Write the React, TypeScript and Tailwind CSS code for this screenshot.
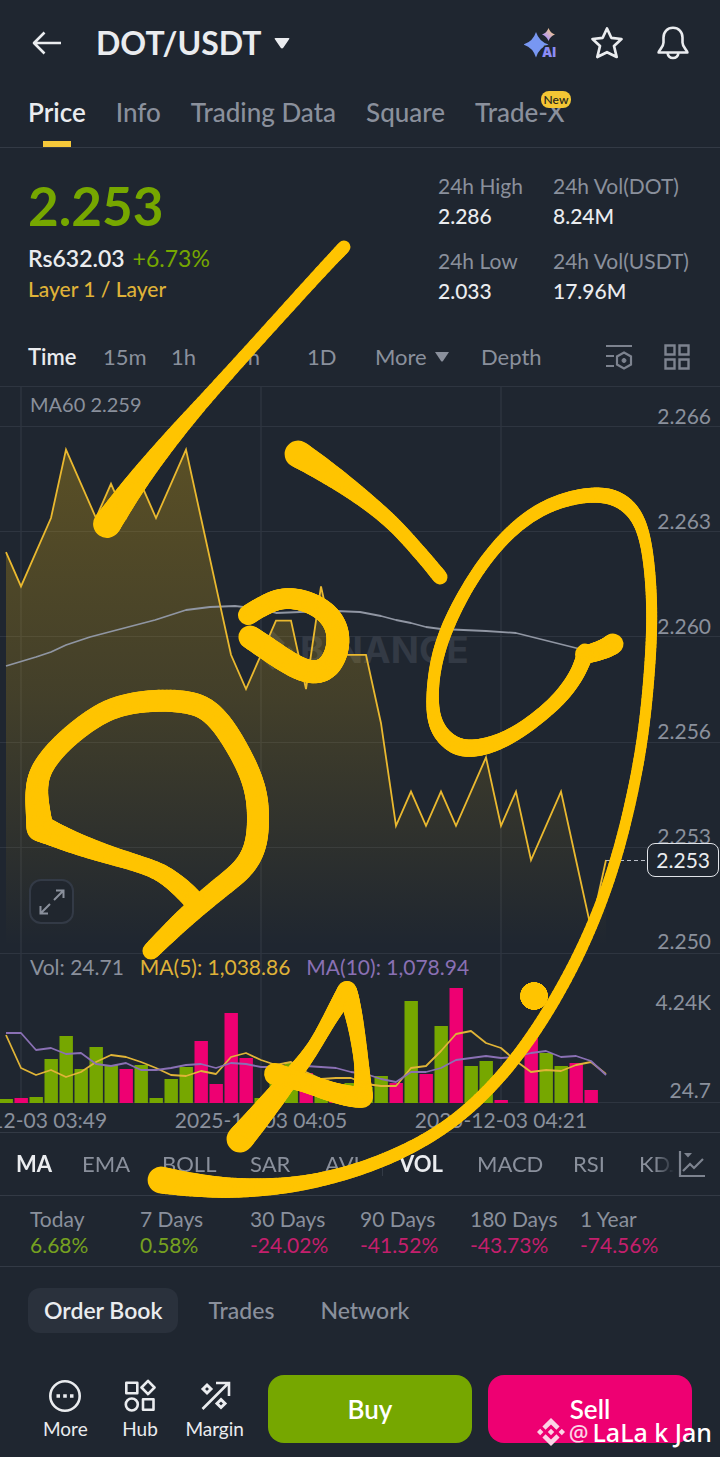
import { useState } from 'react';
import { clsx } from 'clsx';

const tabs = ['Price', 'Info', 'Trading Data', 'Square', 'Trade-X'];

const stats = [
  { label: '24h High', value: '2.286' },
  { label: '24h Vol(DOT)', value: '8.24M' },
  { label: '24h Low', value: '2.033' },
  { label: '24h Vol(USDT)', value: '17.96M' },
];

const performance = [
  { label: 'Today', value: '6.68%' },
  { label: '7 Days', value: '0.58%' },
  { label: '30 Days', value: '-24.02%' },
  { label: '90 Days', value: '-41.52%' },
  { label: '180 Days', value: '-43.73%' },
  { label: '1 Year', value: '-74.56%' },
];

const prices = [
  2.262, 2.261, 2.262, 2.263, 2.265, 2.264, 2.263, 2.264, 2.263, 2.264, 2.263, 2.264, 2.265, 2.263,
  2.261, 2.259, 2.258, 2.259, 2.26, 2.26, 2.258, 2.261, 2.259, 2.259, 2.259, 2.257, 2.254, 2.255,
  2.254, 2.255, 2.254, 2.255, 2.256, 2.254, 2.255, 2.253, 2.254, 2.255, 2.253, 2.251, 2.253,
];

const ma60 =
  '6,280 36,271 51,266 66,259 90,251 155,234 186,224 210,221 235,220 261,223 276,227 300,226 336,225 360,226 381,230 396,234 411,237 426,241 441,243 486,245 516,247 576,262 606,269';

// negative = sell volume
const volumes = [
  4, -5, 6, 44, 67, 34, 56, 38, -34, 38, 5, 24, 36, -62, -19, -90, -45, 5, 23, 41, -30, 13, -3, 20,
  16, 27, -20, 102, -29, 77, -115, 37, 42, -3, 0, -68, 50, 37, -40, -13,
];
const volMa5 = [
  68, 35, 28, 33, 26, 31, 41, 48, 46, 41, 35, 28, 27, 32, 29, 46, 50, 43, 38, 41, 31, 24, 25, 25, 19,
  17, 17, 35, 37, 52, 69, 72, 60, 55, 42, 31, 33, 32, 38, 41, 29,
];
const volMa10 = [
  70, 70, 53, 55, 49, 50, 39, 37, 40, 33, 33, 35, 38, 39, 35, 40, 39, 36, 36, 35, 37, 36, 35, 31, 29,
  24, 21, 31, 31, 35, 43, 45, 47, 45, 46, 50, 52, 46, 47, 42, 28,
];

const BASE = 717;
const px = (i: number) => 6 + i * 15;
const priceY = (p: number) => 474 - (p - 2.253) * 34200;
const volLine = (data: number[]) => data.map((v, i) => `${px(i)},${BASE - v}`).join(' ');

type Dot = [number, number, number];

// marker strokes: x, y, width
const strokes: Dot[][] = [
  [[344, 247, 13], [300, 294, 12], [221, 382, 12], [185, 422, 15], [147, 468, 20], [125, 498, 24], [107, 524, 28]],
  [[298, 454, 27], [330, 474, 22], [360, 496, 17], [385, 516, 15], [410, 541, 14], [440, 577, 15]],
  [[248, 615, 20], [268, 603, 20], [288, 597, 21], [315, 604, 21], [334, 620, 22], [339, 641, 23], [333, 662, 23], [318, 674, 23], [295, 667, 23], [271, 651, 24], [250, 637, 23]],
  [[151, 951, 17], [172, 930, 19], [200, 904, 21], [230, 880, 21], [254, 857, 22], [258, 823, 22], [257, 794, 22], [246, 764, 21], [230, 736, 22], [212, 712, 22], [185, 700, 23], [133, 702, 21], [104, 712, 21], [78, 729, 20], [46, 759, 20], [37, 783, 22], [37, 803, 23], [40, 828, 27]],
  [[40, 828, 27], [60, 837, 23], [85, 847, 21], [122, 859, 17], [152, 868, 17], [171, 879, 19], [190, 896, 21], [197, 905, 20]],
  [[613, 644, 21], [598, 652, 19], [584, 654, 18]],
  [[585, 652, 17], [581, 667, 15], [569, 687, 15], [553, 705, 14], [531, 723, 14], [505, 740, 15], [472, 750, 18], [451, 744, 17], [436, 727, 15], [432, 702, 12], [435, 665, 12], [446, 630, 13], [461, 599, 12], [479, 569, 12], [502, 540, 12], [528, 517, 13], [558, 501, 14], [593, 494, 15], [617, 498, 16], [633, 511, 14], [643, 530, 12], [649, 562, 11], [652, 605, 11], [651, 650, 11], [647, 700, 11], [641, 750, 11], [630, 805, 11], [616, 860, 11], [595, 920, 11], [564, 985, 12], [527, 1044, 12], [495, 1083, 12], [462, 1115, 12], [427, 1139, 12], [393, 1156, 13], [360, 1169, 13], [320, 1180, 14], [283, 1186, 16], [245, 1188, 19], [207, 1187, 22], [161, 1180, 27]],
  [[240, 1139, 27], [268, 1106, 23], [290, 1078, 18], [308, 1056, 14], [322, 1033, 13], [336, 1008, 16], [347, 991, 20]],
  [[347, 991, 20], [353, 1010, 18], [360, 1050, 14], [363, 1080, 15], [362, 1097, 22]],
  [[362, 1097, 21], [345, 1096, 21], [320, 1088, 19], [300, 1081, 19], [275, 1074, 22]],
  [[534, 996, 27], [534, 996, 27]],
];

const spline = (a: number, b: number, c: number, d: number, t: number) =>
  0.5 * (2 * b + (c - a) * t + (2 * a - 5 * b + 4 * c - d) * t * t + (3 * b - a - 3 * c + d) * t * t * t);

function smooth(points: Dot[], steps = 12, radius = 9): Dot[] {
  const line: Dot[] = [];
  for (let i = 0; i < points.length - 1; i++) {
    const p0 = points[Math.max(i - 1, 0)];
    const p1 = points[i];
    const p2 = points[i + 1];
    const p3 = points[Math.min(i + 2, points.length - 1)];
    for (let s = 0; s < steps; s++) {
      const t = s / steps;
      line.push([
        spline(p0[0], p1[0], p2[0], p3[0], t),
        spline(p0[1], p1[1], p2[1], p3[1], t),
        p1[2] + (p2[2] - p1[2]) * t,
      ]);
    }
  }
  line.push(points[points.length - 1]);

  // average the neighbours, both ends stay where they are
  return line.map((_, i) => {
    const r = Math.min(radius, i, line.length - 1 - i);
    const near = line.slice(i - r, i + r + 1);
    const mean = (k: number) => near.reduce((sum, p) => sum + p[k], 0) / near.length;
    return [mean(0), mean(1), mean(2)];
  });
}

function Drawing() {
  return (
    <svg
      viewBox="0 0 720 1457"
      preserveAspectRatio="none"
      className="pointer-events-none absolute inset-0 z-20 h-full w-full"
      stroke="#ffc400"
      strokeLinecap="round"
      aria-hidden="true"
    >
      {strokes.map((points, n) => {
        const line = smooth(points);
        return (
          <g key={n}>
            {line.slice(1).map(([x, y, w], i) => (
              <line key={i} x1={line[i][0]} y1={line[i][1]} x2={x + 0.01} y2={y} strokeWidth={(line[i][2] + w) / 2} />
            ))}
          </g>
        );
      })}
    </svg>
  );
}

function BinanceMark({ className }: { className?: string }) {
  return (
    <svg viewBox="0 0 28 28" className={className} fill="currentColor" aria-hidden="true">
      <path d="M14 0l8.6 8.6-3.2 3.2L14 6.4l-5.4 5.4-3.2-3.2z" />
      <path d="M14 28l8.6-8.6-3.2-3.2L14 21.6l-5.4-5.4-3.2 3.2z" />
      <path d="M3.2 10.8L6.4 14l-3.2 3.2L0 14zM24.8 10.8L28 14l-3.2 3.2-3.2-3.2zM14 10.8l3.2 3.2-3.2 3.2-3.2-3.2z" />
    </svg>
  );
}

function PriceChart() {
  const line = prices.map((p, i) => `${px(i)},${priceY(p)}`).join(' ');

  return (
    <div className="relative h-[717px] overflow-hidden">
      <svg viewBox="0 0 720 717" preserveAspectRatio="none" className="block h-full w-full" fill="none">
        <defs>
          <linearGradient id="area" x1="0" y1="64" x2="0" y2="560" gradientUnits="userSpaceOnUse">
            <stop offset="0" stopColor="#f0b90b" stopOpacity="0.28" />
            <stop offset="0.5" stopColor="#f0b90b" stopOpacity="0.17" />
            <stop offset="1" stopColor="#f0b90b" stopOpacity="0" />
          </linearGradient>
        </defs>
        <g stroke="#2e3540" strokeWidth="1">
          {[0.5, 40.5, 145.5, 250.5, 356.5, 461.5, 567.5, 716.5].map((y) => (
            <path key={y} d={`M0 ${y}H720`} />
          ))}
          {[21, 261, 501].map((x) => (
            <path key={x} d={`M${x} 0V717`} strokeWidth="1.4" />
          ))}
        </g>
        <g fill="#333a45">
          <path d="M273 245l12 12-4 4-8-8-8 8-4-4zM273 284l12-12-4-4-8 8-8-8-4 4zM273 260l4.500 4.500-4.500 4.500-4.500-4.500zM257 260l4.500 4.500-4.500 4.500-4.500-4.500zM289 260l4.500 4.500-4.500 4.500-4.500-4.500z" />
          <text x="300" y="277" fontFamily="Inter, sans-serif" fontWeight="700" fontSize="37">
            BINANCE
          </text>
        </g>
        <polygon points={`6,567 ${line} 606,567`} fill="url(#area)" />
        <polyline points={ma60} stroke="#9096a3" strokeWidth="1.800" strokeLinejoin="round" />
        <polyline points={line} stroke="#eab92f" strokeWidth="1.800" />
        {volumes.map((v, i) => (
          <rect
            key={i}
            x={px(i) - 6.5}
            y={BASE - Math.abs(v)}
            width="13.4"
            height={Math.abs(v)}
            fill={v < 0 ? '#ee0072' : '#76a700'}
          />
        ))}
        <polyline points={volLine(volMa5)} stroke="#e0b437" strokeWidth="1.800" strokeLinejoin="round" />
        <polyline points={volLine(volMa10)} stroke="#8a70b4" strokeWidth="1.800" strokeLinejoin="round" />
        <path d="M606 474.500H648" stroke="#b9bec7" strokeWidth="1" strokeDasharray="4 3" />
      </svg>

      <span className="absolute top-1 left-[30px] text-xl leading-7 text-[#8a909c]">MA60 2.259</span>

      <div className="absolute top-[15px] right-[9px] flex flex-col text-right text-[21px] leading-[30px] text-[#8a909c]">
        {['2.266', '2.263', '2.260', '2.256', '2.253', '2.250'].map((p) => (
          <span key={p} className="h-[105px]">
            {p}
          </span>
        ))}
      </div>
      <span className="absolute top-[457px] right-px rounded-lg border border-[#e0e3e8] bg-[#1f2630] px-2 text-[21px] leading-8 text-[#eaecef]">
        2.253
      </span>

      <button
        type="button"
        aria-label="Full screen"
        className="absolute top-[493px] left-[29px] flex size-[45px] items-center justify-center rounded-xl border-2 border-[#333a46] bg-[#20262f]/90"
      >
        <svg viewBox="0 0 28 28" className="size-7" fill="none" stroke="#8a909c" strokeWidth="2">
          <path d="M16 12L25 3M18 2.500h7.500V10M12 16l-9 9M2.500 18v7.500H10" />
        </svg>
      </button>

      <div className="absolute top-[566px] left-[30px] flex gap-4 text-[21px] leading-[30px]">
        <span className="text-[#8a909c]">Vol: 24.71</span>
        <span className="text-[#dfb238]">MA(5): 1,038.86</span>
        <span className="text-[#8a70b4]">MA(10): 1,078.94</span>
      </div>
      <span className="absolute top-[601px] right-[9px] text-[21px] leading-[30px] text-[#8a909c]">4.24K</span>
      <span className="absolute right-[9px] bottom-px text-[21px] leading-6 text-[#8a909c]">24.7</span>
    </div>
  );
}

function Interval({ label, active, onClick }: { label: string; active: boolean; onClick: () => void }) {
  return (
    <button type="button" onClick={onClick} className={clsx(active ? 'font-semibold text-[#eaecef]' : 'text-[#8a909c]')}>
      {label}
    </button>
  );
}

export default function App() {
  const [tab, setTab] = useState('Price');
  const [interval, setInterval] = useState('Time');
  const [book, setBook] = useState('Order Book');

  return (
    <main className="relative overflow-hidden bg-[#1f2630] font-[Lato,sans-serif] text-[#eaecef]">
      {/* Header */}
      <header className="flex h-[86px] items-center pr-[30px] pl-8">
        <button type="button" aria-label="Back">
          <svg viewBox="0 0 30 24" className="h-6 w-[30px]" fill="none" stroke="currentColor" strokeWidth="2.600" strokeLinejoin="round">
            <path d="M29 12H2.500M12.500 1.500L2 12l10.500 10.500" />
          </svg>
        </button>
        <button type="button" className="ml-[34px] flex items-center gap-3">
          <h1 className="text-[32px] leading-10 font-bold">DOT/USDT</h1>
          <svg viewBox="0 0 16 11" className="h-[11px] w-4" fill="currentColor" aria-hidden="true">
            <path d="M1.500 0h13q1.500 0 .6 1.300l-5.800 8.500q-1.300 1.400-2.600 0L.9 1.300Q0 0 1.500 0z" />
          </svg>
        </button>
        <div className="ml-auto flex items-center gap-8">
          <button type="button" aria-label="AI">
            <svg viewBox="0 0 34 34" className="size-[34px]">
              <defs>
                <linearGradient id="spark" x1="0" y1="1" x2="1" y2="0">
                  <stop offset="0.3" stopColor="#b79cf0" />
                  <stop offset="0.8" stopColor="#f0c58a" />
                </linearGradient>
              </defs>
              <path d="M12 6q3 9.500 12.500 12.500Q15 21.500 12 31.500 9 21.500-.5 18.500 9 15.500 12 6z" fill="#7897f2" />
              <path d="M24.500 2q1.800 5 6.500 6.500-4.700 1.500-6.500 6.500-1.800-5-6.500-6.500 4.700-1.500 6.500-6.500z" fill="url(#spark)" />
              <text x="18" y="31" fill="#8c8cf5" stroke="#1f2630" strokeWidth="3" paintOrder="stroke" fontFamily="Inter, sans-serif" fontWeight="900" fontSize="13">
                AI
              </text>
            </svg>
          </button>
          <button type="button" aria-label="Add to favorites">
            <svg viewBox="0 0 34 34" className="size-[34px]" fill="none" stroke="currentColor" strokeWidth="2.700" strokeLinejoin="round">
              <path d="M17 2.500l4.300 9.300 10.200 1.200-7.500 7 2.700 11L17 26.200 7.300 31 10 20l-7.500-7 10.200-1.200z" />
            </svg>
          </button>
          <button type="button" aria-label="Alerts">
            <svg viewBox="0 0 34 34" className="size-[34px]" fill="none" stroke="currentColor" strokeWidth="2.600" strokeLinejoin="round">
              <path d="M17 1.800c-5.700 0-9.500 4.200-9.500 9.700v5c0 3-1.400 4.800-3.100 6.800-1 1.300-1.800 2.200-1.800 3.200h28.800c0-1-.8-1.900-1.800-3.200-1.700-2-3.100-3.800-3.100-6.800v-5c0-5.500-3.800-9.700-9.500-9.700z" />
              <path d="M11.500 27c.6 3.500 2.800 5 5.500 5s4.900-1.500 5.500-5" />
            </svg>
          </button>
        </div>
      </header>

      {/* Tabs */}
      <nav className="flex h-[62px] gap-[30px] border-b border-[#333a45] px-7">
        {tabs.map((t) => (
          <button
            key={t}
            type="button"
            onClick={() => setTab(t)}
            className={clsx(
              'relative flex flex-col items-center pt-[11px] text-[26px] leading-[30px]',
              tab === t ? 'font-semibold' : 'font-medium text-[#8a909c]'
            )}
          >
            {t}
            {tab === t && <span className="mt-auto h-[6px] w-7 bg-[#f5c83a]" />}
            {t === 'Trade-X' && (
              <span className="absolute top-[5px] -right-[7px] rounded-lg bg-[#f4c634] px-[3px] text-xs leading-[17px] font-semibold text-[#2b2a1e]">
                New
              </span>
            )}
          </button>
        ))}
      </nav>

      {/* Price summary */}
      <section className="flex h-[180px] justify-between px-7">
        <div className="pt-[30px]">
          <p className="text-[53px] leading-[56px] font-bold text-[#76a700]">2.253</p>
          <p className="mt-[10px] flex gap-2 text-[23px] leading-7">
            <span className="font-semibold">Rs632.03</span>
            <span className="text-[#76a700]">+6.73%</span>
          </p>
          <a href="#layer" className="mt-[3px] block text-[21px] leading-7 font-medium text-[#dfb238]">
            Layer 1 / Layer
          </a>
        </div>
        <dl className="grid grid-cols-[115px_139px] content-start gap-y-[15px] pt-[23px]">
          {stats.map((s) => (
            <div key={s.label} className="text-[21px] leading-[30px] whitespace-nowrap">
              <dt className="text-[#8a909c]">{s.label}</dt>
              <dd className="font-medium">{s.value}</dd>
            </div>
          ))}
        </dl>
      </section>

      {/* Intervals */}
      <div className="flex h-[58px] items-center justify-between pr-[29px] pl-7 text-[22px] leading-[30px]">
        <div className="grid grid-cols-[75px_68px_64px_72px_68px_106px_auto] justify-items-start">
          {['Time', '15m', '1h', '4h', '1D'].map((i) => (
            <Interval key={i} label={i} active={interval === i} onClick={() => setInterval(i)} />
          ))}
          <button type="button" className="flex items-center gap-2 text-[#8a909c]">
            More
            <svg viewBox="0 0 14 10" className="h-[10px] w-[14px]" fill="currentColor" aria-hidden="true">
              <path d="M0 0h14L8 9q-1 1-2 0z" />
            </svg>
          </button>
          <Interval label="Depth" active={interval === 'Depth'} onClick={() => setInterval('Depth')} />
        </div>
        <div className="flex items-center gap-[30px] text-[#7d838f]">
          <button type="button" aria-label="Chart settings">
            <svg viewBox="0 0 28 28" className="size-7" fill="none" stroke="currentColor" strokeWidth="2.200">
              <path d="M1 3h26M1 13h8M1 23h8" />
              <path d="M19 9.500l7 4v8l-7 4-7-4v-8z" />
              <circle cx="19" cy="17.500" r="2" fill="currentColor" strokeWidth="1" />
            </svg>
          </button>
          <button type="button" aria-label="Layout">
            <svg viewBox="0 0 28 28" className="size-7" fill="none" stroke="currentColor" strokeWidth="2.400">
              <path d="M2.500 2.500h9v9h-9zM16.500 2.500h9v9h-9zM2.500 16.500h9v9h-9zM16.500 16.500h9v9h-9z" />
            </svg>
          </button>
        </div>
      </div>

      <PriceChart />

      <div className="overflow-hidden border-b border-[#333a45]">
        <div className="-ml-[99px] flex h-[29px] items-center pt-1 text-[21px] leading-6 text-[#8a909c]">
          {['03:49', '04:05', '04:21'].map((t) => (
            <span key={t} className="w-[240px] shrink-0 text-center">
              2025-12-03 {t}
            </span>
          ))}
        </div>
      </div>

      {/* Indicators */}
      <div className="flex h-[63px] items-center overflow-hidden border-b border-[#333a45] pr-[14px] pl-4 text-[22px] leading-[30px] text-[#8a909c]">
        <div className="grid min-w-0 flex-1 grid-cols-[66px_80px_88px_75px_57px_17px_78px_96px_66px_auto] justify-items-start overflow-hidden whitespace-nowrap [mask-image:linear-gradient(to_right,black_97%,transparent)]">
          <button type="button" className="font-bold text-[#eaecef]">MA</button>
          <button type="button">EMA</button>
          <button type="button">BOLL</button>
          <button type="button">SAR</button>
          <button type="button">AVL</button>
          <span className="h-6 w-px self-center bg-[#333a45]" />
          <button type="button" className="font-bold text-[#eaecef]">VOL</button>
          <button type="button">MACD</button>
          <button type="button">RSI</button>
          <button type="button">KDJ</button>
        </div>
        <button type="button" aria-label="Indicator settings" className="ml-1">
          <svg viewBox="0 0 28 28" className="size-7" fill="none" stroke="#7d838f" strokeWidth="2.200">
            <path d="M2 1v25h25M5 21l7-7 4 4 9-9" />
            <path d="M6 3h8l-4 4.500z" fill="#7d838f" stroke="none" />
          </svg>
        </button>
      </div>

      {/* Performance */}
      <dl className="grid h-[71px] grid-cols-6 border-b border-[#333a45] px-[30px] pt-[10px] text-[21px] leading-[26px] whitespace-nowrap">
        {performance.map((p) => (
          <div key={p.label}>
            <dt className="text-[#8a909c]">{p.label}</dt>
            <dd className={p.value.startsWith('-') ? 'text-[#c41f6d]' : 'text-[#76a120]'}>{p.value}</dd>
          </div>
        ))}
      </dl>

      {/* Order book tabs */}
      <div className="flex gap-[14px] px-7 pt-[21px] text-[23px]">
        {['Order Book', 'Trades', 'Network'].map((b) => (
          <button
            key={b}
            type="button"
            onClick={() => setBook(b)}
            className={clsx(
              'rounded-xl px-4 leading-[45px]',
              book === b ? 'bg-[#2a313c] font-semibold' : 'font-medium text-[#8a909c]'
            )}
          >
            {b}
          </button>
        ))}
      </div>

      {/* Bottom bar */}
      <footer className="flex gap-4 px-7 pt-[42px] pb-[14px]">
        <div className="grid w-56 grid-cols-3 text-[19px] leading-6">
          <button type="button" className="flex flex-col items-center gap-1 pt-1">
            <svg viewBox="0 0 34 34" className="size-[34px]" fill="none" stroke="currentColor" strokeWidth="2.600">
              <circle cx="17" cy="17" r="14.700" />
              <path d="M8.500 17H12M15.200 17h3.600M22 17h3.500" strokeWidth="3.600" />
            </svg>
            More
          </button>
          <button type="button" className="flex flex-col items-center gap-1 pt-1">
            <svg viewBox="0 0 34 34" className="size-[34px]" fill="none" stroke="currentColor" strokeWidth="2.600" strokeLinejoin="round">
              <path d="M3.300 3.700h11v10.600h-11zM20 20.300h10.500v10.500H20zM25 1.800l6.500 6.700-6.500 6.700-6.500-6.700z" />
              <circle cx="8.800" cy="25.500" r="6" />
            </svg>
            Hub
          </button>
          <button type="button" className="flex flex-col items-center gap-1 pt-1">
            <svg viewBox="0 0 34 34" className="size-[34px]" fill="none" stroke="currentColor" strokeWidth="2.600">
              <path d="M4.500 30L30 4.500M18 4h13v13" />
              <path d="M9 6l4 4-4 4-4-4zM23 20.500l4 4-4 4-4-4z" strokeWidth="3" />
            </svg>
            Margin
          </button>
        </div>
        <button type="button" className="h-[68px] flex-1 rounded-2xl bg-[#76a700] text-[26px] font-semibold text-white">
          Buy
        </button>
        <button type="button" className="h-[68px] flex-1 rounded-2xl bg-[#ee0072] text-[26px] font-semibold text-white">
          Sell
        </button>
      </footer>

      <Drawing />

      <div className="absolute right-2 bottom-[10px] z-30 flex items-center gap-1 font-['Noto_Sans',sans-serif] text-[25px] leading-[30px] font-medium text-white">
        <BinanceMark className="size-7 text-[#fcd3e6]" />
        <span className="text-[22px] text-[#fcd3e6]">@</span>
        <span>LaLa k Jan</span>
      </div>
    </main>
  );
}
